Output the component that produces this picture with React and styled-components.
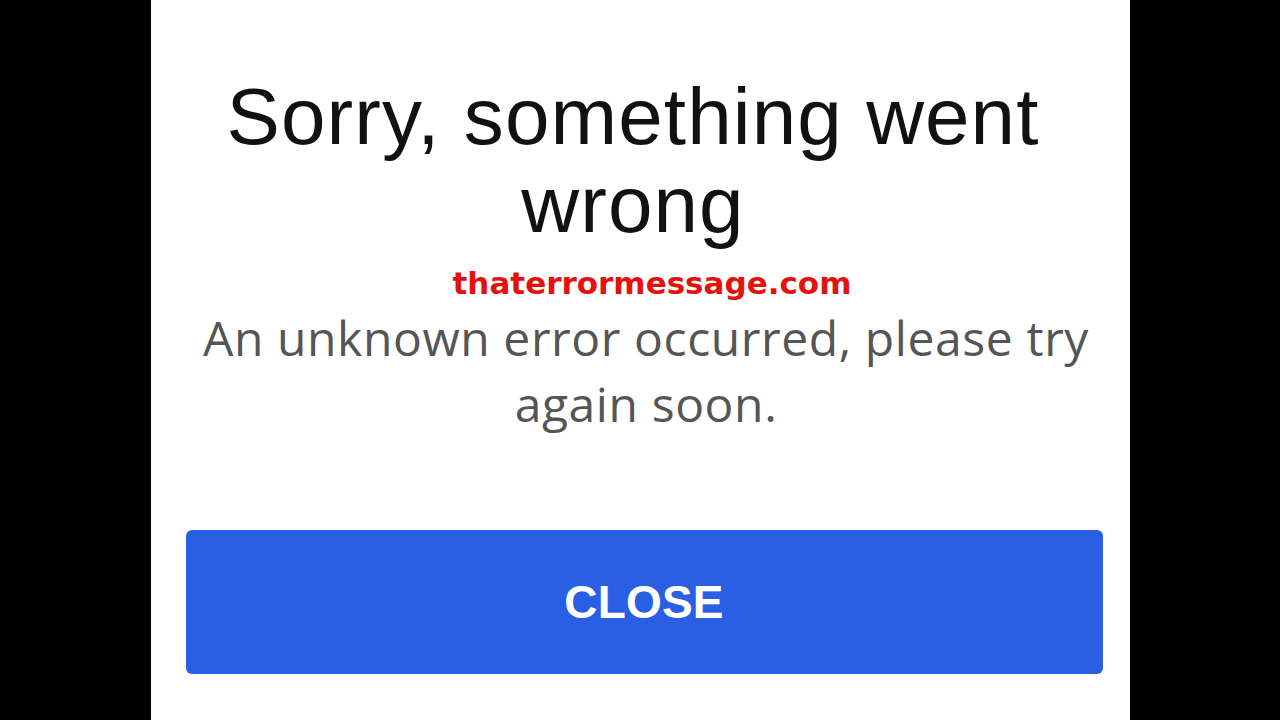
import React from "react";
import styled, { createGlobalStyle } from "styled-components";

const Global = createGlobalStyle`
  html, body { margin: 0; padding: 0; background: #000; }
  body { height: 720px; overflow: hidden; }
`;

const Stage = styled.div`
  width: 1280px;
  height: 720px;
  display: flex;
  justify-content: center;
  background: #000;
`;

const Panel = styled.div`
  width: 979px;
  height: 720px;
  background: #fff;
  box-sizing: border-box;
  padding: 73px 27px 0 35px;
  display: flex;
  flex-direction: column;
  align-items: center;
`;

const Title = styled.h1`
  margin: 0 22px 0 0;
  font-family: "Liberation Sans", Arial, sans-serif;
  font-weight: 400;
  font-size: 80px;
  line-height: 88px;
  color: #111;
  text-align: center;
  letter-spacing: 1.1px;
  width: 860px;
`;

const Watermark = styled.div`
  margin: 14px 0 0 16px;
  font-family: "DejaVu Sans", Verdana, sans-serif;
  font-weight: 700;
  font-size: 31px;
  line-height: 40px;
  color: #e4120e;
  letter-spacing: 0;
`;

const Message = styled.p`
  margin: 2px 0 0 4px;
  font-family: "Open Sans", Lato, sans-serif;
  font-weight: 400;
  font-size: 48px;
  line-height: 66px;
  color: #555;
  text-align: center;
  letter-spacing: 0.6px;
  width: 912px;
`;

const CloseButton = styled.button`
  margin-top: 93px;
  width: 917px;
  height: 144px;
  border: none;
  border-radius: 6px;
  background: #2b5fe3;
  color: #fff;
  font-family: "Liberation Sans", Arial, sans-serif;
  font-weight: 700;
  font-size: 46px;
  letter-spacing: 0.2px;
  cursor: pointer;
`;

export default function App() {
  return (
    <>
      <Global />
      <Stage>
        <Panel>
          <Title>Sorry, something went wrong</Title>
          <Watermark>thaterrormessage.com</Watermark>
          <Message>An unknown error occurred, please try again soon.</Message>
          <CloseButton>CLOSE</CloseButton>
        </Panel>
      </Stage>
    </>
  );
}
